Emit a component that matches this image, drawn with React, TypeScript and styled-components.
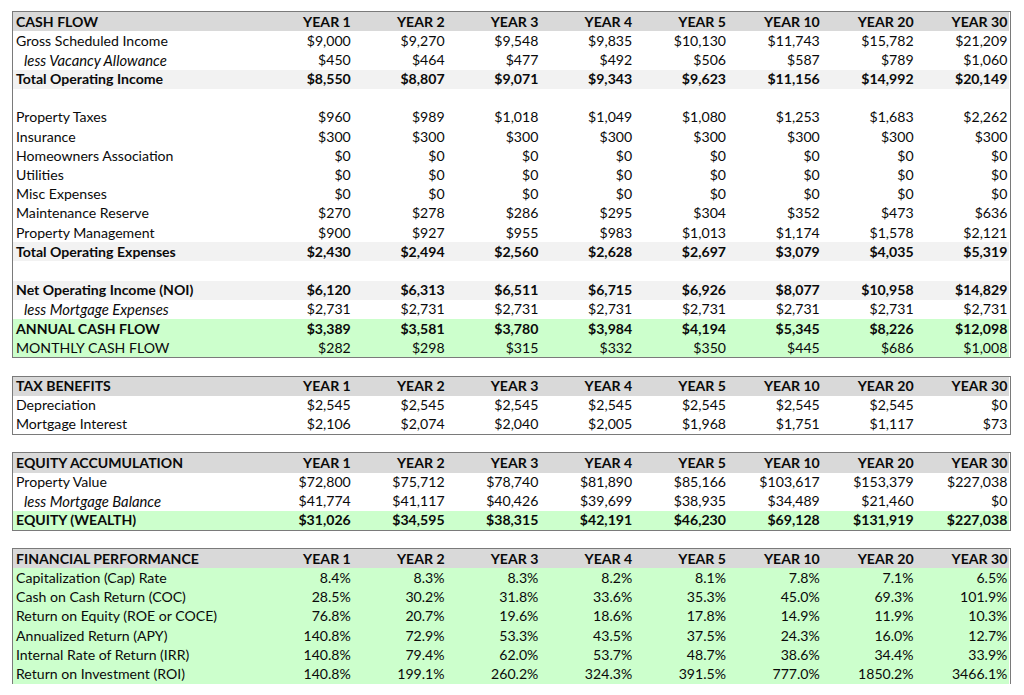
import React from "react";
import styled, { createGlobalStyle, css } from "styled-components";

const GlobalStyle = createGlobalStyle`
  html, body { margin: 0; padding: 0; background: #ffffff; }
  body { font-family: Lato, "Liberation Sans", sans-serif; color: #000; }
`;

type Kind = "head" | "plain" | "sub" | "total" | "greenBold" | "blank" | "greenPlain";

type Row = { label: string; kind: Kind; values?: string[] };

const YEARS = ["YEAR 1", "YEAR 2", "YEAR 3", "YEAR 4", "YEAR 5", "YEAR 10", "YEAR 20", "YEAR 30"];

const rep = (v: string) => Array(8).fill(v) as string[];

const cashFlow: Row[] = [
  { label: "CASH FLOW", kind: "head", values: YEARS },
  { label: "Gross Scheduled Income", kind: "plain", values: ["$9,000", "$9,270", "$9,548", "$9,835", "$10,130", "$11,743", "$15,782", "$21,209"] },
  { label: "less Vacancy Allowance", kind: "sub", values: ["$450", "$464", "$477", "$492", "$506", "$587", "$789", "$1,060"] },
  { label: "Total Operating Income", kind: "total", values: ["$8,550", "$8,807", "$9,071", "$9,343", "$9,623", "$11,156", "$14,992", "$20,149"] },
  { label: "", kind: "blank" },
  { label: "Property Taxes", kind: "plain", values: ["$960", "$989", "$1,018", "$1,049", "$1,080", "$1,253", "$1,683", "$2,262"] },
  { label: "Insurance", kind: "plain", values: rep("$300") },
  { label: "Homeowners Association", kind: "plain", values: rep("$0") },
  { label: "Utilities", kind: "plain", values: rep("$0") },
  { label: "Misc Expenses", kind: "plain", values: rep("$0") },
  { label: "Maintenance Reserve", kind: "plain", values: ["$270", "$278", "$286", "$295", "$304", "$352", "$473", "$636"] },
  { label: "Property Management", kind: "plain", values: ["$900", "$927", "$955", "$983", "$1,013", "$1,174", "$1,578", "$2,121"] },
  { label: "Total Operating Expenses", kind: "total", values: ["$2,430", "$2,494", "$2,560", "$2,628", "$2,697", "$3,079", "$4,035", "$5,319"] },
  { label: "", kind: "blank" },
  { label: "Net Operating Income (NOI)", kind: "total", values: ["$6,120", "$6,313", "$6,511", "$6,715", "$6,926", "$8,077", "$10,958", "$14,829"] },
  { label: "less Mortgage Expenses", kind: "sub", values: rep("$2,731") },
  { label: "ANNUAL CASH FLOW", kind: "greenBold", values: ["$3,389", "$3,581", "$3,780", "$3,984", "$4,194", "$5,345", "$8,226", "$12,098"] },
  { label: "MONTHLY CASH FLOW", kind: "greenPlain", values: ["$282", "$298", "$315", "$332", "$350", "$445", "$686", "$1,008"] },
];

const taxBenefits: Row[] = [
  { label: "TAX BENEFITS", kind: "head", values: YEARS },
  { label: "Depreciation", kind: "plain", values: ["$2,545", "$2,545", "$2,545", "$2,545", "$2,545", "$2,545", "$2,545", "$0"] },
  { label: "Mortgage Interest", kind: "plain", values: ["$2,106", "$2,074", "$2,040", "$2,005", "$1,968", "$1,751", "$1,117", "$73"] },
];

const equity: Row[] = [
  { label: "EQUITY ACCUMULATION", kind: "head", values: YEARS },
  { label: "Property Value", kind: "plain", values: ["$72,800", "$75,712", "$78,740", "$81,890", "$85,166", "$103,617", "$153,379", "$227,038"] },
  { label: "less Mortgage Balance", kind: "sub", values: ["$41,774", "$41,117", "$40,426", "$39,699", "$38,935", "$34,489", "$21,460", "$0"] },
  { label: "EQUITY (WEALTH)", kind: "greenBold", values: ["$31,026", "$34,595", "$38,315", "$42,191", "$46,230", "$69,128", "$131,919", "$227,038"] },
];

const performance: Row[] = [
  { label: "FINANCIAL PERFORMANCE", kind: "head", values: YEARS },
  { label: "Capitalization (Cap) Rate", kind: "greenPlain", values: ["8.4%", "8.3%", "8.3%", "8.2%", "8.1%", "7.8%", "7.1%", "6.5%"] },
  { label: "Cash on Cash Return (COC)", kind: "greenPlain", values: ["28.5%", "30.2%", "31.8%", "33.6%", "35.3%", "45.0%", "69.3%", "101.9%"] },
  { label: "Return on Equity (ROE or COCE)", kind: "greenPlain", values: ["76.8%", "20.7%", "19.6%", "18.6%", "17.8%", "14.9%", "11.9%", "10.3%"] },
  { label: "Annualized Return (APY)", kind: "greenPlain", values: ["140.8%", "72.9%", "53.3%", "43.5%", "37.5%", "24.3%", "16.0%", "12.7%"] },
  { label: "Internal Rate of Return (IRR)", kind: "greenPlain", values: ["140.8%", "79.4%", "62.0%", "53.7%", "48.7%", "38.6%", "34.4%", "33.9%"] },
  { label: "Return on Investment (ROI)", kind: "greenPlain", values: ["140.8%", "199.1%", "260.2%", "324.3%", "391.5%", "777.0%", "1850.2%", "3466.1%"] },
];

const Page = styled.div`
  display: flex;
  flex-direction: column;
  gap: 19.2px;
  padding: 12px 0 0 12px;
  width: 999px;
`;

const Sheet = styled.div`
  display: grid;
  grid-template-columns: 246px repeat(8, 93.8px);
  grid-auto-rows: 19.2px;
  border: 1px solid #7a7a7a;
  margin: -1px 0;
`;

const bg: Record<Kind, string> = {
  head: "#d9d9d9",
  plain: "#ffffff",
  sub: "#ffffff",
  total: "#f2f2f2",
  greenBold: "#ccffcc",
  greenPlain: "#ccffcc",
  blank: "#ffffff",
};

const isBold = (k: Kind) => k === "head" || k === "total" || k === "greenBold";

const Line = styled.div<{ $kind: Kind }>`
  display: contents;
  & > div {
    background: ${(p) => bg[p.$kind]};
    font-weight: ${(p) => (isBold(p.$kind) ? 700 : 400)};
  }
`;

const Cell = styled.div<{ $label?: boolean; $sub?: boolean }>`
  display: flex;
  align-items: center;
  font-size: 14.1px;
  line-height: 1;
  white-space: nowrap;
  color: #0a0a0a;
  ${(p) =>
    p.$label
      ? css`
          justify-content: flex-start;
          padding-left: ${p.$sub ? "11px" : "3px"};
          font-style: ${p.$sub ? "italic" : "normal"};
          font-size: ${p.$sub ? "14.8px" : "14.1px"};
        `
      : css`
          justify-content: flex-end;
          padding-right: 2px;
        `}
`;

function Table({ rows }: { rows: Row[] }) {
  return (
    <Sheet>
      {rows.map((r, i) => (
        <Line key={i} $kind={r.kind}>
          <Cell $label $sub={r.kind === "sub"}>{r.label}</Cell>
          {(r.values ?? rep("")).map((v, j) => (
            <Cell key={j}>{v}</Cell>
          ))}
        </Line>
      ))}
    </Sheet>
  );
}

export default function App() {
  return (
    <>
      <GlobalStyle />
      <Page>
        <Table rows={cashFlow} />
        <Table rows={taxBenefits} />
        <Table rows={equity} />
        <Table rows={performance} />
      </Page>
    </>
  );
}
